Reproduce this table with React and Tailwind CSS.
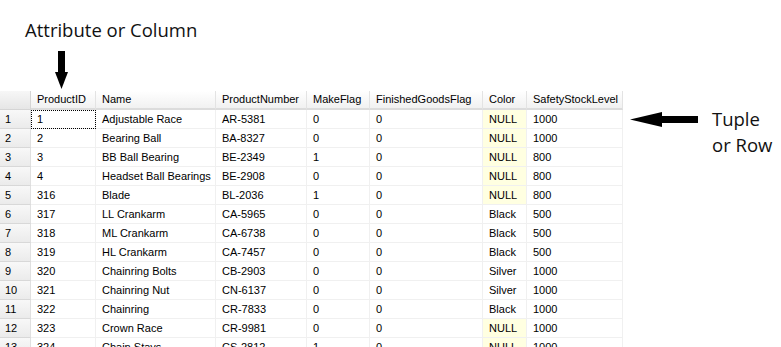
import React from 'react';

const columns = [
  { key: 'id', label: 'ProductID', w: 'w-[65px]' },
  { key: 'name', label: 'Name', w: 'w-[120px]' },
  { key: 'num', label: 'ProductNumber', w: 'w-[91px]' },
  { key: 'make', label: 'MakeFlag', w: 'w-[63px]' },
  { key: 'fin', label: 'FinishedGoodsFlag', w: 'w-[113px]' },
  { key: 'color', label: 'Color', w: 'w-[44px]' },
  { key: 'ssl', label: 'SafetyStockLevel', w: 'w-[96px]' },
];

const rows = [
  ['1', 'Adjustable Race', 'AR-5381', '0', '0', 'NULL', '1000'],
  ['2', 'Bearing Ball', 'BA-8327', '0', '0', 'NULL', '1000'],
  ['3', 'BB Ball Bearing', 'BE-2349', '1', '0', 'NULL', '800'],
  ['4', 'Headset Ball Bearings', 'BE-2908', '0', '0', 'NULL', '800'],
  ['316', 'Blade', 'BL-2036', '1', '0', 'NULL', '800'],
  ['317', 'LL Crankarm', 'CA-5965', '0', '0', 'Black', '500'],
  ['318', 'ML Crankarm', 'CA-6738', '0', '0', 'Black', '500'],
  ['319', 'HL Crankarm', 'CA-7457', '0', '0', 'Black', '500'],
  ['320', 'Chainring Bolts', 'CB-2903', '0', '0', 'Silver', '1000'],
  ['321', 'Chainring Nut', 'CN-6137', '0', '0', 'Silver', '1000'],
  ['322', 'Chainring', 'CR-7833', '0', '0', 'Black', '1000'],
  ['323', 'Crown Race', 'CR-9981', '0', '0', 'NULL', '1000'],
  ['324', 'Chain Stays', 'CS-2812', '1', '0', 'NULL', '1000'],
];

function Cell({ value, w, col, rowIndex }) {
  const isNull = value === 'NULL';
  const selected = rowIndex === 0 && col === 0;
  return (
    <div
      className={`${w} h-[19px] shrink-0 border-r border-b border-[#f0f0f0] pl-[6px] leading-[18px] whitespace-nowrap overflow-hidden ${
        isNull ? 'bg-[#ffffe1]' : 'bg-white'
      } ${selected ? 'bg-[#e8ecf0] outline-1 outline-dotted outline-black -outline-offset-1' : ''}`}
    >
      {value}
    </div>
  );
}

export default function App() {
  return (
    <div className="w-[781px] h-[347px] overflow-hidden bg-white text-black">
      <div className="h-[91px] flex flex-col">
        <div className="pl-[25px] pt-[18px] text-[18.5px] leading-[24px] font-['Open_Sans','Liberation_Sans',sans-serif] text-[#111]">
          Attribute or Column
        </div>
        <svg className="ml-[54px] mt-[9px]" width="16" height="40" viewBox="0 0 16 40">
          <rect x="4" y="0" width="7" height="22" fill="black" />
          <polygon points="1,21 14,21 7.5,38" fill="black" />
        </svg>
      </div>

      <div className="flex font-['Liberation_Sans',Arial,sans-serif] text-[11px]">
        <div className="w-[623px] shrink-0">
          <div className="flex h-[19px]">
            <div className="w-[31px] shrink-0 bg-gradient-to-b from-[#f7f7f7] to-[#e6e6e6] border-r border-b border-[#d5d5d5]" />
            {columns.map((c) => (
              <div
                key={c.key}
                className={`${c.w} shrink-0 pl-[6px] leading-[17px] bg-gradient-to-b from-white to-[#f1f1f1] border-r border-[#e3e3e3] border-b-2 border-b-[#dcdcdc] whitespace-nowrap`}
              >
                {c.label}
              </div>
            ))}
          </div>
          {rows.map((r, i) => (
            <div key={i} className="flex">
              <div className="w-[31px] h-[19px] shrink-0 pl-[5px] leading-[18px] bg-gradient-to-b from-[#f8f8f8] to-[#ebebeb] border-r border-[#e0e0e0] border-b border-b-[#d8d8d8]">
                {i + 1}
              </div>
              {r.map((v, j) => (
                <Cell key={j} value={v} w={columns[j].w} col={j} rowIndex={i} />
              ))}
            </div>
          ))}
        </div>

        <div className="flex items-start pt-[15px] pl-[7px]">
          <svg width="70" height="16" viewBox="0 0 70 16" className="mt-[5px] shrink-0">
            <rect x="32" y="5" width="36" height="7" fill="black" />
            <polygon points="0,8.5 32,1 32,16" fill="black" />
          </svg>
          <div className="pl-[12px] text-[18.5px] leading-[26px] font-['Open_Sans','Liberation_Sans',sans-serif] text-[#111]">
            Tuple
            <br />
            or Row
          </div>
        </div>
      </div>
    </div>
  );
}
